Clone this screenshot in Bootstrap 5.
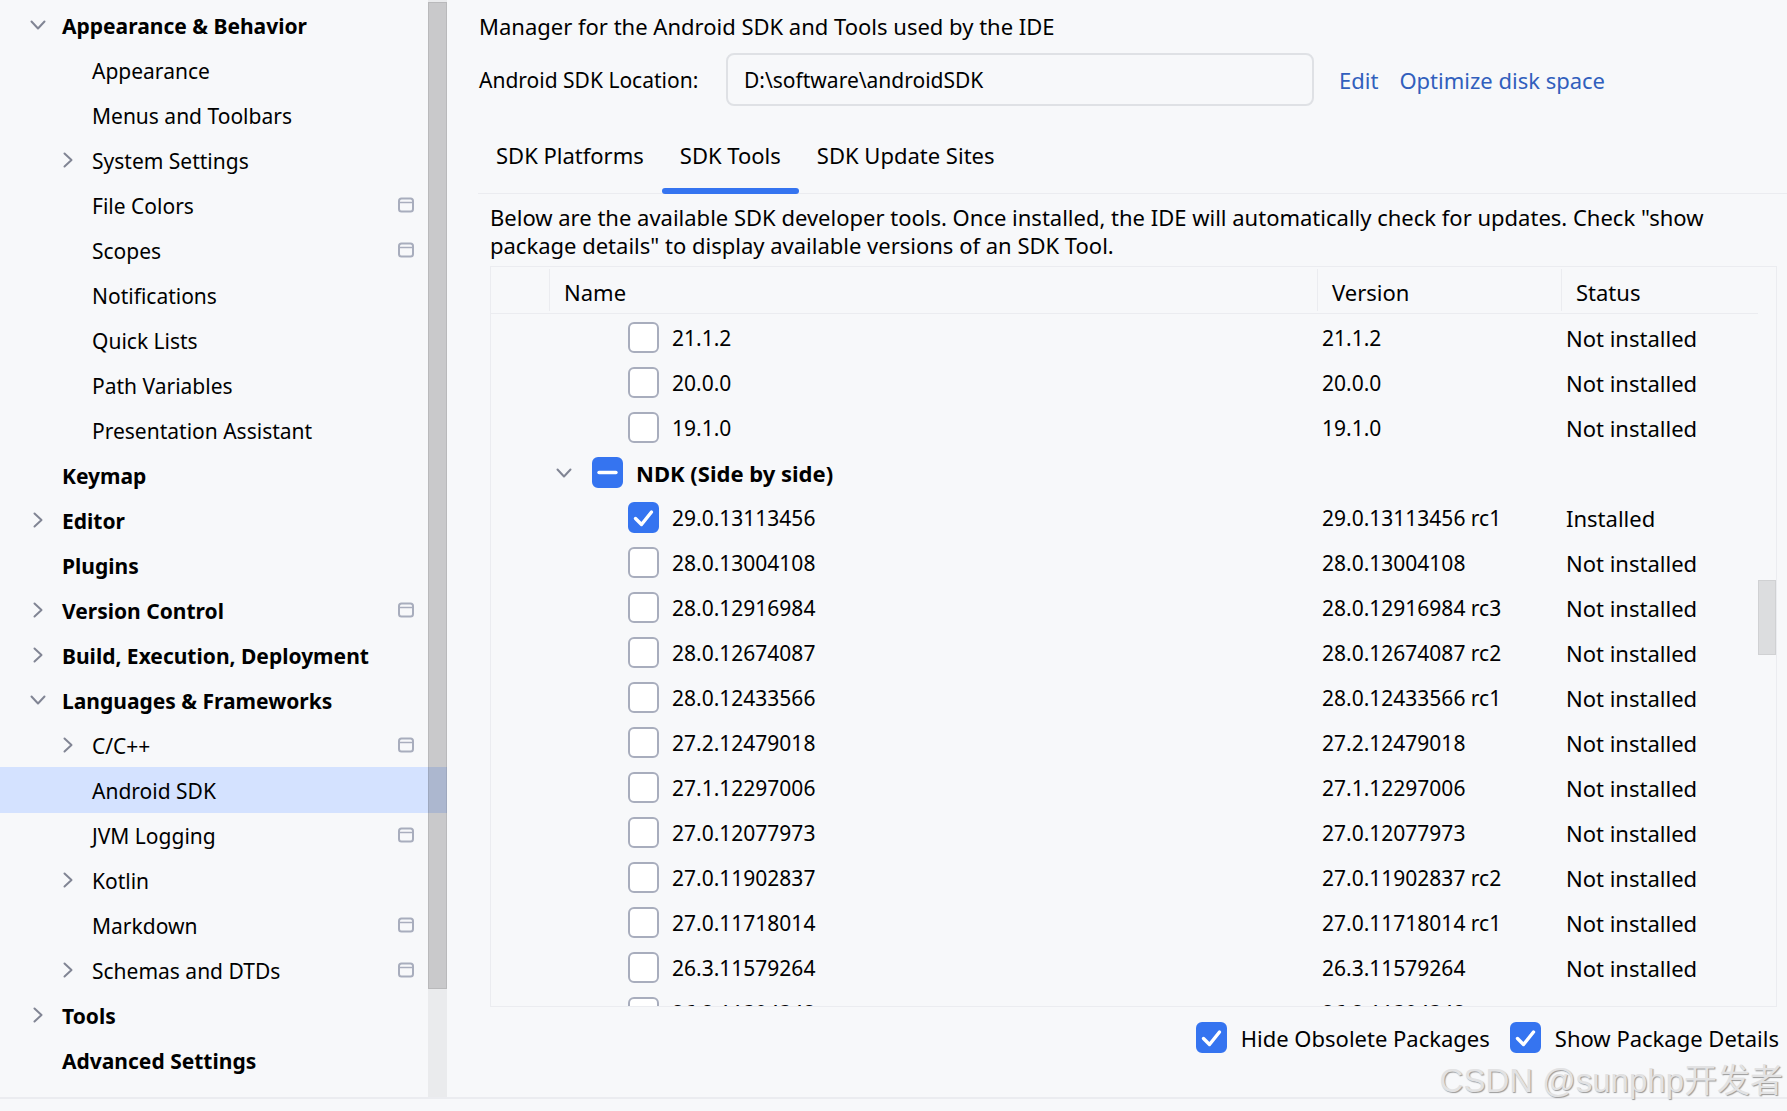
<!DOCTYPE html>
<html lang="en">
<head>
<meta charset="utf-8">
<meta name="viewport" content="width=device-width, initial-scale=1">
<title>Settings - Android SDK</title>
<link href="https://cdn.jsdelivr.net/npm/bootstrap@5.3.0/dist/css/bootstrap.min.css" rel="stylesheet">
<style>
  :root { --panel: #f7f8fa; --line: #ebecf0; --accent: #3574f0; --muted-stroke: #a8adbd; }
  body { background: var(--panel); color: #000; font: 22px/28px "Noto Sans", "Noto Sans CJK SC", sans-serif; }
  .shell { min-height: 100vh; height: 100vh; overflow: hidden; }
  .status-strip { height: 14px; border-top: 2px solid var(--line); }

  /* settings tree */
  .side { width: 447px; padding-top: 2px; }
  .tree-item { height: 45px; padding: 2px 33px 0 30px; gap: 16px; color: #000; font-size: 21px; text-decoration: none; white-space: nowrap; }
  .tree-item svg { margin-bottom: 2px; }
  .tree-item.top { font-weight: 700; }
  .tree-item.sub { padding-left: 60px; }
  .tree-item.selected { background: #d4e2ff; box-shadow: 0 1px #d4e2ff; }
  .chev { width: 16px; height: 16px; flex: none; fill: none; stroke: #818594; stroke-width: 2; stroke-linecap: round; stroke-linejoin: round; }
  .scope { width: 16px; height: 16px; flex: none; fill: none; stroke: var(--muted-stroke); stroke-width: 2; }
  .side-track { width: 19px; background: rgba(0,0,0,.05); }
  .side-thumb { margin-top: 2px; height: 90%; background: rgba(0,0,0,.14); border: 1px solid rgba(0,0,0,.08); }

  /* SDK page */
  .sdk-head { padding: 0 16px 0 32px; }
  .sdk-title { padding: 12px 0 13px; }
  .location { gap: 21px; }
  .location label { width: 247px; font-size: 21px; }
  .location .form-control { width: 588px; height: 53px; padding: 0 16px; font: inherit; font-size: 21px; color: #000; background: transparent; border: 2px solid #dfe1e5; border-radius: 8px; }
  .location a { color: #315fbd; text-decoration: none; }
  .sdk-tabs { margin: 22px 0 0 31px; height: 66px; border-bottom: 1px solid var(--line); }
  .sdk-tabs button { height: 66px; padding: 0 18px 6px; border: 0; border-bottom: 6px solid transparent; background: none; position: relative; }
  .sdk-tabs button.active::after { content: ""; position: absolute; left: 0; right: 0; bottom: -6px; height: 6px; border-radius: 3px; background: var(--accent); }
  .sdk-body { padding: 9px 10px 0 43px; }
  .sdk-note { margin: 0 60px 7px 0; }
  .grid-box { border: 1px solid var(--line); padding-right: 18px; min-height: 0; }
  .pkg { width: 100%; table-layout: fixed; border-collapse: separate; border-spacing: 0; }
  .pkg th { height: 48px; padding: 2px 0 0 15px; font-weight: 400;
    background: linear-gradient(var(--line), var(--line)) 0 46px / 100% 1px no-repeat, linear-gradient(var(--line), var(--line)) 0 2px / 1px 42px no-repeat; }
  .pkg th:first-child { background: linear-gradient(var(--line), var(--line)) 0 46px / 100% 1px no-repeat; }
  .pkg td { height: 45px; padding: 0 0 0 5px; white-space: nowrap; font-size: 21px; }
  .pkg td:last-child { font-size: 22px; }
  .pkg .c-gutter { width: 58px; }
  .pkg .c-version { width: 244px; }
  .pkg .c-status { width: 197px; }
  .entry { gap: 13px; padding-left: 74px; }
  .entry.group-row { padding-left: 2px; font-weight: 700; font-size: 22px; }
  .entry.group-row .chev { margin-right: 7px; }
  .form-check-input.box { flex: none; width: 31px; height: 31px; margin: 0; border: 2px solid var(--muted-stroke); border-radius: 6px; background-color: #fff; }
  .form-check-input.box:checked, .form-check-input.box:indeterminate { background-color: var(--accent); border-color: var(--accent); background-size: 27px 27px; }
  .form-check-input.box:checked { background-image: url("data:image/svg+xml,%3csvg xmlns='http://www.w3.org/2000/svg' viewBox='0 0 27 27'%3e%3cpath fill='none' stroke='%23fff' stroke-width='3.4' stroke-linecap='round' stroke-linejoin='round' d='M5.5 14.5l6 6L21.5 8'/%3e%3c/svg%3e"); }
  .form-check-input.box:indeterminate { background-image: url("data:image/svg+xml,%3csvg xmlns='http://www.w3.org/2000/svg' viewBox='0 0 27 27'%3e%3cpath fill='none' stroke='%23fff' stroke-width='3.4' stroke-linecap='round' d='M5 13.5h17'/%3e%3c/svg%3e"); }
  .grid-thumb { right: 0; top: 313px; width: 18px; height: 75px; background: #dcdddf; border: 1px solid #d0d1d3; }
  .sdk-foot { height: 90px; padding: 15px 8px 0 0; gap: 20px; }
  .sdk-foot .opt { gap: 14px; height: 31px; }
  .stamp { right: 4px; bottom: 10px; font: 33px/40px "Liberation Sans", "Noto Sans CJK SC", sans-serif; color: #e2e2e3; text-shadow: 1px 1px 1px #999; pointer-events: none; }
</style>
<script src="https://cdn.jsdelivr.net/npm/bootstrap@5.3.0/dist/js/bootstrap.bundle.min.js"></script>
</head>
<body>
<svg class="d-none" aria-hidden="true">
  <symbol id="down" viewBox="0 0 16 16"><path d="M1.5 4.500L8 11.500l6.500-7"/></symbol>
  <symbol id="right" viewBox="0 0 16 16"><path d="M4.500 1.500L11.500 8l-7 6.500"/></symbol>
  <symbol id="win" viewBox="0 0 16 16"><rect x="1" y="1.500" width="14" height="13" rx="2.500"/><path d="M1 5.500h14" stroke-width="1.500"/></symbol>
</svg>

<div class="shell d-flex flex-column position-relative">
  <div class="d-flex flex-grow-1 overflow-hidden">

    <nav class="side flex-shrink-0 position-relative" aria-label="Settings">
      <a href="#" class="tree-item top d-flex align-items-center"><svg class="chev"><use href="#down"/></svg>Appearance &amp; Behavior</a>
      <a href="#" class="tree-item sub d-flex align-items-center"><svg class="chev"></svg>Appearance</a>
      <a href="#" class="tree-item sub d-flex align-items-center"><svg class="chev"></svg>Menus and Toolbars</a>
      <a href="#" class="tree-item sub d-flex align-items-center"><svg class="chev"><use href="#right"/></svg>System Settings</a>
      <a href="#" class="tree-item sub d-flex align-items-center"><svg class="chev"></svg>File Colors<svg class="scope ms-auto"><use href="#win"/></svg></a>
      <a href="#" class="tree-item sub d-flex align-items-center"><svg class="chev"></svg>Scopes<svg class="scope ms-auto"><use href="#win"/></svg></a>
      <a href="#" class="tree-item sub d-flex align-items-center"><svg class="chev"></svg>Notifications</a>
      <a href="#" class="tree-item sub d-flex align-items-center"><svg class="chev"></svg>Quick Lists</a>
      <a href="#" class="tree-item sub d-flex align-items-center"><svg class="chev"></svg>Path Variables</a>
      <a href="#" class="tree-item sub d-flex align-items-center"><svg class="chev"></svg>Presentation Assistant</a>
      <a href="#" class="tree-item top d-flex align-items-center"><svg class="chev"></svg>Keymap</a>
      <a href="#" class="tree-item top d-flex align-items-center"><svg class="chev"><use href="#right"/></svg>Editor</a>
      <a href="#" class="tree-item top d-flex align-items-center"><svg class="chev"></svg>Plugins</a>
      <a href="#" class="tree-item top d-flex align-items-center"><svg class="chev"><use href="#right"/></svg>Version Control<svg class="scope ms-auto"><use href="#win"/></svg></a>
      <a href="#" class="tree-item top d-flex align-items-center"><svg class="chev"><use href="#right"/></svg>Build, Execution, Deployment</a>
      <a href="#" class="tree-item top d-flex align-items-center"><svg class="chev"><use href="#down"/></svg>Languages &amp; Frameworks</a>
      <a href="#" class="tree-item sub d-flex align-items-center"><svg class="chev"><use href="#right"/></svg>C/C++<svg class="scope ms-auto"><use href="#win"/></svg></a>
      <a href="#" class="tree-item sub selected d-flex align-items-center" aria-current="page"><svg class="chev"></svg>Android SDK</a>
      <a href="#" class="tree-item sub d-flex align-items-center"><svg class="chev"></svg>JVM Logging<svg class="scope ms-auto"><use href="#win"/></svg></a>
      <a href="#" class="tree-item sub d-flex align-items-center"><svg class="chev"><use href="#right"/></svg>Kotlin</a>
      <a href="#" class="tree-item sub d-flex align-items-center"><svg class="chev"></svg>Markdown<svg class="scope ms-auto"><use href="#win"/></svg></a>
      <a href="#" class="tree-item sub d-flex align-items-center"><svg class="chev"><use href="#right"/></svg>Schemas and DTDs<svg class="scope ms-auto"><use href="#win"/></svg></a>
      <a href="#" class="tree-item top d-flex align-items-center"><svg class="chev"><use href="#right"/></svg>Tools</a>
      <a href="#" class="tree-item top d-flex align-items-center"><svg class="chev"></svg>Advanced Settings</a>
      <div class="side-track position-absolute top-0 end-0 h-100 overflow-hidden"><div class="side-thumb"></div></div>
    </nav>

    <main class="d-flex flex-column flex-grow-1 overflow-hidden">
      <div class="sdk-head">
        <div class="sdk-title">Manager for the Android SDK and Tools used by the IDE</div>
        <div class="location d-flex align-items-center">
          <div class="d-flex align-items-center">
            <label for="sdk-path" class="flex-shrink-0">Android SDK Location:</label>
            <input id="sdk-path" class="form-control" type="text" value="D:\software\androidSDK" readonly>
          </div>
          <a href="#" class="ms-1">Edit</a>
          <a href="#">Optimize disk space</a>
        </div>
      </div>

      <div class="sdk-tabs d-flex" role="tablist">
        <button type="button" role="tab">SDK Platforms</button>
        <button type="button" role="tab" class="active" aria-selected="true">SDK Tools</button>
        <button type="button" role="tab">SDK Update Sites</button>
      </div>

      <div class="sdk-body d-flex flex-column flex-grow-1 overflow-hidden">
        <p class="sdk-note">Below are the available SDK developer tools. Once installed, the IDE will automatically check for updates. Check "show package details" to display available versions of an SDK Tool.</p>
        <div class="grid-box flex-grow-1 overflow-hidden position-relative">
          <table class="pkg">
            <colgroup><col class="c-gutter"><col><col class="c-version"><col class="c-status"></colgroup>
            <thead><tr><th></th><th scope="col">Name</th><th scope="col">Version</th><th scope="col">Status</th></tr></thead>
            <tbody>
              <tr><td></td><td><label class="entry d-flex align-items-center"><input class="form-check-input box" type="checkbox">21.1.2</label></td><td>21.1.2</td><td>Not installed</td></tr>
              <tr><td></td><td><label class="entry d-flex align-items-center"><input class="form-check-input box" type="checkbox">20.0.0</label></td><td>20.0.0</td><td>Not installed</td></tr>
              <tr><td></td><td><label class="entry d-flex align-items-center"><input class="form-check-input box" type="checkbox">19.1.0</label></td><td>19.1.0</td><td>Not installed</td></tr>
              <tr><td></td><td><label class="entry group-row d-flex align-items-center"><svg class="chev"><use href="#down"/></svg><input id="ndk" class="form-check-input box" type="checkbox">NDK (Side by side)</label></td><td></td><td></td></tr>
              <tr><td></td><td><label class="entry d-flex align-items-center"><input class="form-check-input box" type="checkbox" checked>29.0.13113456</label></td><td>29.0.13113456 rc1</td><td>Installed</td></tr>
              <tr><td></td><td><label class="entry d-flex align-items-center"><input class="form-check-input box" type="checkbox">28.0.13004108</label></td><td>28.0.13004108</td><td>Not installed</td></tr>
              <tr><td></td><td><label class="entry d-flex align-items-center"><input class="form-check-input box" type="checkbox">28.0.12916984</label></td><td>28.0.12916984 rc3</td><td>Not installed</td></tr>
              <tr><td></td><td><label class="entry d-flex align-items-center"><input class="form-check-input box" type="checkbox">28.0.12674087</label></td><td>28.0.12674087 rc2</td><td>Not installed</td></tr>
              <tr><td></td><td><label class="entry d-flex align-items-center"><input class="form-check-input box" type="checkbox">28.0.12433566</label></td><td>28.0.12433566 rc1</td><td>Not installed</td></tr>
              <tr><td></td><td><label class="entry d-flex align-items-center"><input class="form-check-input box" type="checkbox">27.2.12479018</label></td><td>27.2.12479018</td><td>Not installed</td></tr>
              <tr><td></td><td><label class="entry d-flex align-items-center"><input class="form-check-input box" type="checkbox">27.1.12297006</label></td><td>27.1.12297006</td><td>Not installed</td></tr>
              <tr><td></td><td><label class="entry d-flex align-items-center"><input class="form-check-input box" type="checkbox">27.0.12077973</label></td><td>27.0.12077973</td><td>Not installed</td></tr>
              <tr><td></td><td><label class="entry d-flex align-items-center"><input class="form-check-input box" type="checkbox">27.0.11902837</label></td><td>27.0.11902837 rc2</td><td>Not installed</td></tr>
              <tr><td></td><td><label class="entry d-flex align-items-center"><input class="form-check-input box" type="checkbox">27.0.11718014</label></td><td>27.0.11718014 rc1</td><td>Not installed</td></tr>
              <tr><td></td><td><label class="entry d-flex align-items-center"><input class="form-check-input box" type="checkbox">26.3.11579264</label></td><td>26.3.11579264</td><td>Not installed</td></tr>
              <tr><td></td><td><label class="entry d-flex align-items-center"><input class="form-check-input box" type="checkbox">26.2.11394342</label></td><td>26.2.11394342</td><td>Not installed</td></tr>
            </tbody>
          </table>
          <div class="grid-thumb position-absolute"></div>
        </div>
      </div>

      <div class="sdk-foot d-flex justify-content-end flex-shrink-0">
        <label class="opt d-flex align-items-center"><input class="form-check-input box" type="checkbox" checked>Hide Obsolete Packages</label>
        <label class="opt d-flex align-items-center"><input class="form-check-input box" type="checkbox" checked>Show Package Details</label>
      </div>
    </main>
  </div>
  <div class="status-strip flex-shrink-0"></div>
  <div class="stamp position-absolute">CSDN @sunphp开发者</div>
</div>
<script>
  document.getElementById('ndk').indeterminate = true;
</script>
</body>
</html>
